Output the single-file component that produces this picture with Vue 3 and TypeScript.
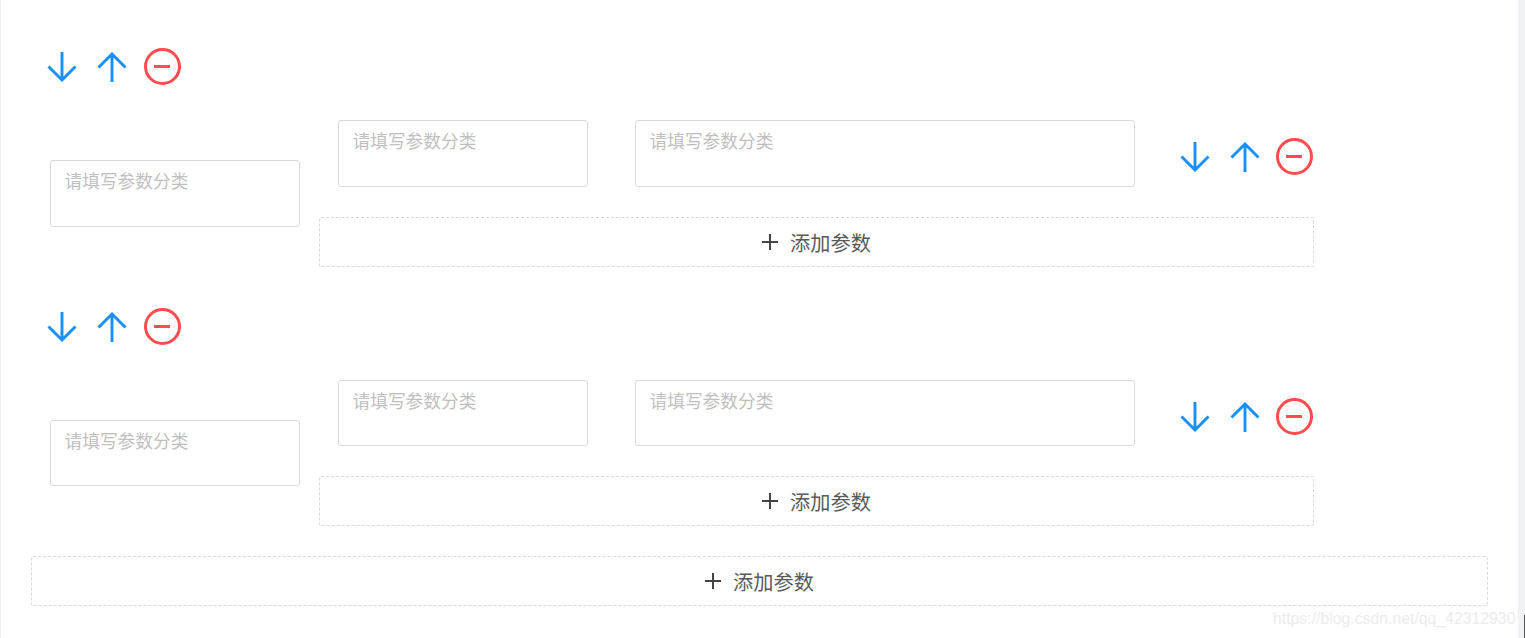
<script setup lang="ts">
interface ParamGroup {
  id: number
}

const groups: ParamGroup[] = [{ id: 1 }, { id: 2 }]
const placeholder = '请填写参数分类'
</script>

<template>
  <div class="page">
    <div v-for="g in groups" :key="g.id" class="group">
      <div class="actions top-actions">
        <svg class="arrow" viewBox="0 0 30 30"><path d="M15 0V28M1.5 14.5L15 28L28.5 14.5" /></svg>
        <svg class="arrow" viewBox="0 0 30 30"><path d="M15 30V2M1.5 15.5L15 2L28.5 15.5" /></svg>
        <svg class="remove" viewBox="0 0 37 37"><circle cx="18.5" cy="18.5" r="17" /><path d="M10 18.5H26" /></svg>
      </div>

      <div class="row">
        <textarea class="input first" :placeholder="placeholder"></textarea>
        <div class="params">
          <div class="param-row">
            <textarea class="input short" :placeholder="placeholder"></textarea>
            <textarea class="input long" :placeholder="placeholder"></textarea>
            <div class="actions inner-actions">
              <svg class="arrow" viewBox="0 0 30 30"><path d="M15 0V28M1.5 14.5L15 28L28.5 14.5" /></svg>
              <svg class="arrow" viewBox="0 0 30 30"><path d="M15 30V2M1.5 15.5L15 2L28.5 15.5" /></svg>
              <svg class="remove" viewBox="0 0 37 37"><circle cx="18.5" cy="18.5" r="17" /><path d="M10 18.5H26" /></svg>
            </div>
          </div>
          <button class="add">
            <svg class="plus" viewBox="0 0 16 16"><path d="M8 0V16M0 8H16" /></svg>
            <span>添加参数</span>
          </button>
        </div>
      </div>
    </div>

    <button class="add add-group">
      <svg class="plus" viewBox="0 0 16 16"><path d="M8 0V16M0 8H16" /></svg>
      <span>添加参数</span>
    </button>

    <div class="watermark">https://blog.csdn.net/qq_42312930</div>
    <div class="edge"></div>
  </div>
</template>

<style scoped>
.page { position: relative; box-sizing: border-box; width: 1518px; height: 638px; padding-top: 48px; background: #fff; border-left: 1px solid #f0f0f0; font-family: "Noto Sans CJK SC", "Noto Sans", sans-serif; }
.group { margin-bottom: 41px; }
.group:nth-of-type(2) { margin-bottom: 30px; }
.group:nth-of-type(2) .row { height: 146px; }
.group:nth-of-type(2) .input { height: 66px; }
.group:nth-of-type(2) .param-row { height: 66px; }
.actions { display: flex; align-items: flex-start; }
.top-actions { height: 37px; margin: 0 0 35px 46px; }
.inner-actions { margin: 18px 0 0 45px; }
.arrow { width: 30px; height: 30px; margin-top: 4px; margin-right: 20px; fill: none; stroke: #1890ff; stroke-width: 2.9; }
.arrow + .arrow { margin-right: 17px; }
.inner-actions .arrow + .arrow { margin-right: 16px; }
.remove { width: 37px; height: 37px; fill: none; stroke: #ff4d4f; stroke-width: 3; }
.row { display: flex; align-items: center; height: 147px; }
.input { box-sizing: border-box; display: block; height: 67px; padding: 6px 13.5px; border: 1px solid #d9d9d9; border-radius: 3px; background: #fff; font-family: inherit; font-size: 17.7px; line-height: 26px; resize: none; outline: none; }
.input::placeholder { color: #bfbfbf; opacity: 1; }
.first { width: 250px; margin: 0 19px 0 49px; }
.params { width: 995px; }
.param-row { display: flex; align-items: flex-start; height: 67px; margin-bottom: 30px; padding-left: 19px; }
.short { width: 250px; margin-right: 47px; }
.long { width: 500px; }
.add { display: flex; align-items: center; justify-content: center; gap: 12px; box-sizing: border-box; width: 100%; height: 50px; padding: 0; border: 1px dashed #d9d9d9; border-radius: 2px; background: #fff; color: #595959; font-family: inherit; font-size: 20.2px; }
.add span { padding-top: 1px; }
.add-group { width: 1457px; margin-left: 30px; }
.plus { width: 16px; height: 16px; fill: none; stroke: #444; stroke-width: 2; }
.watermark { position: absolute; left: 1272px; top: 610px; font-family: "Liberation Sans", Arial, sans-serif; font-size: 15.8px; color: #ececec; white-space: nowrap; }
.edge { position: absolute; left: 1523px; top: 615px; width: 1px; height: 23px; background: #555; }
</style>

<style>
html, body { margin: 0; background: #f0f2f5; overflow: hidden; }
</style>
